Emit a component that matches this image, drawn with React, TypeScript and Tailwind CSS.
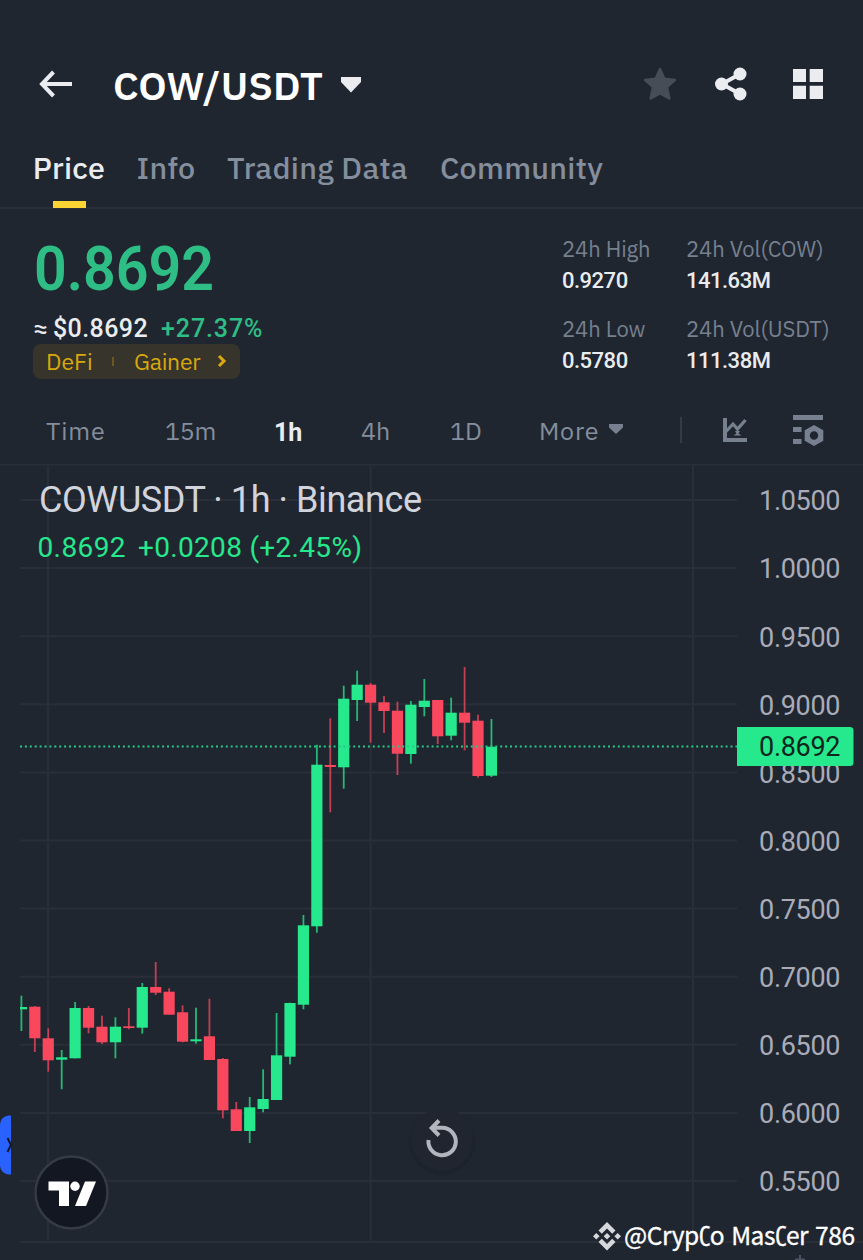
import { clsx } from "clsx"

const tabs = [
  { name: "Price", width: "w-[70px]", active: true },
  { name: "Info", width: "w-[58px]" },
  { name: "Trading Data", width: "w-[179px]" },
  { name: "Community", width: "w-[163px]" },
]

const stats = [
  { label: "24h High", value: "0.9270" },
  { label: "24h Vol(COW)", value: "141.63M" },
  { label: "24h Low", value: "0.5780" },
  { label: "24h Vol(USDT)", value: "111.38M" },
]

const UP = "#26e88c"
const DOWN = "#f9485e"

// [up, wick top, wick bottom, body top, body bottom]
const candles: [number, number, number, number, number][] = [
  [1, 995.7, 1031, 1007, 1009.3],
  [0, 1006, 1052, 1006.7, 1038.3],
  [0, 1028.3, 1071.7, 1038.3, 1060.3],
  [1, 1050, 1089.3, 1057.3, 1059.7],
  [1, 1002, 1058.3, 1008, 1058.3],
  [0, 1006, 1033.3, 1008, 1027.7],
  [0, 1015.7, 1044, 1026.7, 1042.3],
  [1, 1017.3, 1058.3, 1026.7, 1042.3],
  [0, 1008, 1029.3, 1026.3, 1028],
  [1, 983, 1033.7, 987, 1027.7],
  [0, 962, 995, 987, 992.7],
  [0, 988.3, 1014.7, 991.7, 1014.7],
  [0, 1005.3, 1042.3, 1012.3, 1041.7],
  [1, 1007.7, 1043.7, 1039.3, 1041.3],
  [0, 998.7, 1060, 1036.3, 1060],
  [0, 1058, 1118.3, 1059, 1110.3],
  [0, 1102, 1131, 1109.3, 1131],
  [1, 1097, 1143, 1107.3, 1131],
  [1, 1069.3, 1112.3, 1099, 1109],
  [1, 1013, 1100, 1055.3, 1100],
  [1, 1002.7, 1064.3, 1003, 1056.7],
  [1, 915, 1009.3, 925.3, 1004.7],
  [1, 744.7, 932.7, 764.7, 926.3],
  [0, 718.3, 812.3, 765, 767],
  [1, 685.7, 788.7, 698.7, 767.3],
  [1, 670.7, 721, 684.7, 700],
  [0, 683, 742.7, 684.7, 702.7],
  [0, 696, 733, 702.3, 711],
  [0, 701.7, 775, 710.7, 753.7],
  [1, 701, 763.7, 704.7, 754],
  [1, 679, 716.3, 700.7, 707],
  [0, 700, 744, 700, 736.3],
  [1, 697.7, 740.3, 712.7, 735.7],
  [0, 667, 750.3, 712.7, 722.7],
  [0, 714.7, 777.7, 720.7, 776],
  [1, 719, 777, 746.7, 775.7],
]

const prices = ["1.0500", "1.0000", "0.9500", "0.9000", "0.8500", "0.8000", "0.7500", "0.7000", "0.6500", "0.6000", "0.5500"]

function Header() {
  return (
    <header className="flex h-[127px] items-center pt-[42px] pl-[39px] pr-[40px] text-[#eaecef]">
      <svg className="-mt-px" width="34" height="28" viewBox="0 0 34 28" fill="none" stroke="currentColor" strokeWidth="4">
        <path d="M2.500 14H33M14.500 2L3 14l11.500 12" />
      </svg>
      <h1 className="ml-[40px] w-[211px] whitespace-nowrap text-[40px] font-semibold leading-none tracking-[0.2px] text-white">
        COW/USDT
      </h1>
      <svg className="ml-[16px]" width="22" height="17" viewBox="0 0 22 17" fill="currentColor">
        <path d="M1 1h20v5L11 16.500 1 6z" />
      </svg>
      <div className="-mt-px ml-auto flex items-center">
        <svg width="34" height="34" viewBox="0 0 34 34" fill="#474d57" stroke="#474d57" strokeWidth="2.500" strokeLinejoin="round">
          <path d="M17 2l4.300 9.800 10.700 1.100-8 7.200 2.300 11.400L17 26.500l-9.300 5L10 20.100l-8-7.200 10.700-1.100z" />
        </svg>
        <svg className="ml-[38px]" width="32" height="34" viewBox="0 0 32 34" fill="currentColor">
          <path d="M7 17L25 7M7 17l18 10" stroke="currentColor" strokeWidth="4" />
          <circle cx="6.500" cy="17" r="6.500" />
          <circle cx="25" cy="7" r="6.500" />
          <circle cx="25" cy="27" r="6.500" />
        </svg>
        <svg className="ml-[46px]" width="30" height="30" viewBox="0 0 30 30" fill="currentColor">
          <path d="M0 0h13v13H0zM16.700 0H30v13H16.700zM0 16.700h13V30H0zM16.700 16.700H30V30H16.700z" />
        </svg>
      </div>
    </header>
  )
}

function Tabs() {
  return (
    <nav className="flex h-[82px] gap-[33px] border-b-2 border-[#292e37] pl-[34px] text-[30.5px] font-medium tracking-[0.3px]">
      {tabs.map((tab) => (
        <div key={tab.name} className={clsx("flex flex-col items-center", tab.width, tab.active ? "text-[#eaecef]" : "text-[#848e9c]")}>
          <span className="mt-[21px] whitespace-nowrap leading-[40px]">{tab.name}</span>
          {tab.active && <span className="mt-[13px] h-[7px] w-[33px] shrink-0 bg-[#fcd535]" />}
        </div>
      ))}
    </nav>
  )
}

function Ticker() {
  return (
    <section className="flex h-[189px] pl-[33px]">
      <div className="w-[529px] pt-[30px]">
        <div className="h-[60px] whitespace-nowrap pl-px font-[Roboto,sans-serif] text-[61px] font-semibold leading-[60px] text-[#2ebd85]">
          <span className="inline-block origin-left scale-x-[0.94]">0.8692</span>
        </div>
        <div className="mt-[15px] flex h-[30px] items-center whitespace-nowrap font-[Roboto,sans-serif] text-[25px] font-medium leading-[30px]">
          <span className="-mt-[2px] w-[20px] font-['IBM_Plex_Sans',Roboto,sans-serif] text-[#eaecef]">≈</span>
          <span className="w-[108px] tracking-[0.4px] text-[#eaecef]">$0.8692</span>
          <span className="tracking-[0.9px] text-[#2ebd85]">+27.37%</span>
        </div>
        <div className="flex h-[35px] w-[207px] items-center rounded-lg bg-[#37342b] pb-px pl-[13px] text-[23px] text-[#d8a80e]">
          <span className="w-[66px]">DeFi</span>
          <span className="h-[9px] w-[2px] bg-[#6b581f]" />
          <span className="ml-[20px] w-[66px] tracking-[-0.3px]">Gainer</span>
          <svg className="ml-[17px]" width="10" height="14" viewBox="0 0 10 14" fill="none" stroke="currentColor" strokeWidth="3">
            <path d="M2 2l5 5-5 5" />
          </svg>
        </div>
      </div>
      <div className="grid h-[160px] grid-cols-[124px_160px] grid-rows-[80px_80px] pt-[25px]">
        {stats.map((s) => (
          <div key={s.label} className="whitespace-nowrap leading-[30px]">
            <div className="text-[22px] tracking-[-0.1px] text-[#76808f]">{s.label}</div>
            <div className="mt-[2px] font-[Roboto,sans-serif] text-[22px] font-medium tracking-[-0.5px] text-[#eaecef]">{s.value}</div>
          </div>
        ))}
      </div>
    </section>
  )
}

function Intervals() {
  return (
    <div className="flex h-[66px] items-center pl-[46px] text-[25px] text-[#848e9c]">
      <span className="w-[119px] tracking-[0.9px]">Time</span>
      <span className="w-[109px] tracking-[-0.3px]">15m</span>
      <span className="mt-[3px] w-[87px] font-[Roboto,sans-serif] font-bold text-[#eaecef]">1h</span>
      <span className="w-[89px]">4h</span>
      <span className="w-[89px]">1D</span>
      <span className="w-[69px] tracking-[0.8px]">More</span>
      <svg className="-mt-[5px]" width="16" height="12" viewBox="0 0 16 12" fill="#76808f">
        <path d="M1 1h14v3.500L8 11 1 4.500z" />
      </svg>
      <span className="-mt-[2px] ml-[56px] h-[26px] w-[2px] bg-[#343b46]" />
      <svg className="-mt-[3px] ml-[41px]" width="24" height="24" viewBox="0 0 24 24" fill="none" stroke="#76808f">
        <path d="M2 0v22h22" strokeWidth="4" />
        <path d="M3 13.500l7-7.500 4.500 5L22.500 2" strokeWidth="3.200" />
        <path d="M10.500 17.500l3-2-1.500-2.500h5l-1.500 2.500 3 2z" fill="#76808f" stroke="none" />
      </svg>
      <svg className="ml-[46px]" width="31" height="32" viewBox="0 0 31 32" fill="#76808f">
        <path d="M0 0h30v5H0zM0 12h8.500v5H0zM0 24h8.500v5H0z" />
        <path fillRule="evenodd" d="M21 10l9.300 5.300v10.400L21 31l-9.300-5.300V15.300zM21 16.300a4.200 4.200 0 100 8.400 4.200 4.200 0 000-8.400z" />
      </svg>
    </div>
  )
}

function Chart() {
  return (
    <svg className="block font-[Roboto,sans-serif]" width="863" height="796" viewBox="0 464 863 796">
      <g stroke="#292e38" strokeWidth="2">
        <path d="M0 464.500H863" />
        {prices.map((p, i) => (
          <path key={p} d={`M20 ${500 + i * 68.1}H737`} />
        ))}
        <path d="M20 1242H863M48 464v778M370.700 464v778M693 464v778" />
      </g>
      {candles.map(([up, high, low, top, bottom], i) => {
        const x = 21.4 + i * 13.43
        const left = Math.max(20, x - 5.6)
        return (
          <g key={i} fill={up ? UP : DOWN}>
            <rect x={x - 0.9} y={high} width="1.8" height={low - high} opacity="0.75" />
            <rect x={left} y={top} width={x + 5.6 - left} height={bottom - top} />
          </g>
        )
      })}
      <path d="M20 746.500H737" stroke="#26c987" strokeWidth="1.900" strokeDasharray="2 2.900" />
      <g fill="#a9acb8" fontSize="27">
        {prices.map((p, i) => (
          <text key={p} x="759" y={510.3 + i * 68.1} textLength="81.500">{p}</text>
        ))}
      </g>
      <path d="M737 727h113a3.500 3.500 0 013.500 3.500v32a3.500 3.500 0 01-3.500 3.500H737z" fill={UP} />
      <text x="759" y="756.400" fontSize="27" textLength="81.500" fill="#10251c">0.8692</text>
      <text x="39" y="511.500" fontSize="36" textLength="383" fill="#d1d4dc">COWUSDT · 1h · Binance</text>
      <g fontSize="28" fill={UP}>
        <text x="37.500" y="557" textLength="88">0.8692</text>
        <text x="138" y="557" textLength="224">+0.0208 (+2.45%)</text>
      </g>
      <path d="M11 1115.500H9a9 9 0 00-9 9v41a9 9 0 009 9h2z" fill="#2962ff" />
      <path d="M7.500 1138l3.500 7-3.500 7" fill="none" stroke="#131722" strokeWidth="2" />
      <circle cx="71.500" cy="1192.500" r="36" fill="#131722" stroke="#363a45" strokeWidth="2.500" />
      <g fill="#fff">
        <path d="M48.500 1181.500H69v24.500h-10v-15.500H48.500z" />
        <circle cx="75" cy="1186.200" r="4.700" />
        <path d="M85 1181.500h11l-10 24.500H75z" />
      </g>
      <circle cx="442" cy="1142" r="33" fill="#1d212b" opacity="0.6" />
      <circle cx="442" cy="1139.500" r="31" fill="#20252f" />
      <g fill="none" stroke="#b2b5be" strokeWidth="4">
        <path d="M428.500 1140a13.700 13.700 0 1013.700-12.200H431.500" strokeLinejoin="round" />
        <path d="M439 1120.500l-7.300 7.500 7.300 7.500" />
      </g>
      <g fill="#d6d8db">
        <path d="M607 1222l8.500 8.500-3.300 3.300-5.200-5.200-5.200 5.200-3.300-3.300zM607 1250.500l8.500-8.500-3.300-3.300-5.200 5.200-5.200-5.200-3.300 3.300z" />
        <path d="M607 1233l3.300 3.300-3.300 3.300-3.300-3.300zM596.300 1233l3.300 3.300-3.300 3.300-3.300-3.300zM617.700 1233l3.300 3.300-3.300 3.300-3.300-3.300z" />
      </g>
      <g className="font-['Noto_Sans_CJK_SC','Noto_Sans',sans-serif]" fontSize="24.500" fill="#fff" stroke="#fff" strokeWidth="0.300">
        <text x="624" y="1245" textLength="231" wordSpacing="2">
          @Cryp<tspan dy="-5">ʗ</tspan><tspan dy="5">o Mas</tspan><tspan dy="-5">ʗ</tspan><tspan dy="5">er 786</tspan>
        </text>
      </g>
      <path d="M800 1255v5M795 1259.500h10" stroke="#4d5563" strokeWidth="2" />
    </svg>
  )
}

export default function App() {
  return (
    <div className="h-[1260px] w-[863px] overflow-hidden bg-[#202630] font-['IBM_Plex_Sans',Roboto,sans-serif]">
      <Header />
      <Tabs />
      <Ticker />
      <Intervals />
      <Chart />
    </div>
  )
}
